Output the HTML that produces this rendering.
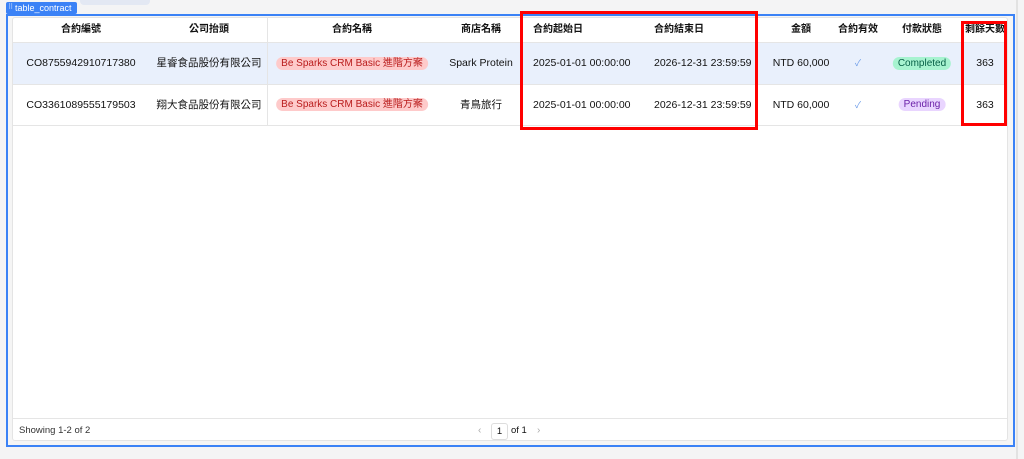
<!DOCTYPE html>
<html><head><meta charset="utf-8"><style>
*{margin:0;padding:0;box-sizing:border-box}
body{width:1024px;height:459px;background:#f4f4f5;position:relative;overflow:hidden;font-family:"Liberation Sans","Noto Sans CJK TC",sans-serif;font-size:10.5px;line-height:14px;color:#111}
.a{position:absolute;white-space:nowrap}
.t{position:absolute;white-space:nowrap;transform:translateX(-50%)}
.h{font-weight:bold;top:23px;font-size:10px}
.r1{top:56px}.r2{top:98px}
.pill{border-radius:7px;padding:0 5px;font-size:10px;line-height:13px}
.p1{top:57px}.p2{top:98px}
</style></head><body>
<div class="a" style="left:80px;top:0;width:70px;height:5px;background:#e3e8f3;border-radius:0 0 4px 4px"></div>
<div class="a" style="left:1016px;top:0;width:2px;height:459px;background:#e2e2e2"></div>
<div class="a" style="left:6px;top:2px;width:71px;height:12px;background:#3b82f6;border-radius:2px;color:#fff;font-size:9px;line-height:12px;padding-left:9px">table_contract</div>
<div class="a" style="left:8px;top:2px;color:#cfe0ff;font-size:7px;line-height:12px">⠿</div>
<div class="a" style="left:6px;top:14px;width:1009px;height:433px;border:2px solid #3b82f6;background:#f5f5f5"></div>
<div class="a" style="left:12px;top:17px;width:996px;height:424px;background:#fff;border:1px solid #e4e4e4;border-radius:3px"></div>
<div class="a" style="left:13px;top:42px;width:994px;height:1px;background:#e5e5e5"></div>
<div class="a" style="left:13px;top:43px;width:994px;height:41px;background:#e9f0fc"></div>
<div class="a" style="left:13px;top:84px;width:994px;height:1px;background:#e5e5e5"></div>
<div class="a" style="left:13px;top:125px;width:994px;height:1px;background:#e5e5e5"></div>
<div class="a" style="left:267px;top:18px;width:1px;height:108px;background:#e5e5e5"></div>
<div class="a" style="left:13px;top:418px;width:994px;height:1px;background:#e5e5e5"></div>

<div class="t h" style="left:81px">合約編號</div>
<div class="t h" style="left:209px">公司抬頭</div>
<div class="t h" style="left:352px">合約名稱</div>
<div class="t h" style="left:481px">商店名稱</div>
<div class="a h" style="left:533px">合約起始日</div>
<div class="a h" style="left:654px">合約結束日</div>
<div class="t h" style="left:801px">金額</div>
<div class="t h" style="left:858px">合約有效</div>
<div class="t h" style="left:922px">付款狀態</div>
<div class="t h" style="left:985px">剩餘天數</div>

<div class="t r1" style="left:81px">CO8755942910717380</div>
<div class="t r1" style="left:209px">星睿食品股份有限公司</div>
<div class="t pill p1" style="left:352px;background:#fecaca;color:#b91c1c">Be Sparks CRM Basic 進階方案</div>
<div class="t r1" style="left:481px">Spark Protein</div>
<div class="a r1" style="left:533px">2025-01-01 00:00:00</div>
<div class="a r1" style="left:654px">2026-12-31 23:59:59</div>
<div class="t r1" style="left:801px">NTD 60,000</div>
<div class="t r1" style="left:858px;color:#6b9be8;font-size:9px">✓</div>
<div class="t pill p1" style="left:922px;background:#a7f3d0;color:#065f46">Completed</div>
<div class="t r1" style="left:985px">363</div>

<div class="t r2" style="left:81px">CO3361089555179503</div>
<div class="t r2" style="left:209px">翔大食品股份有限公司</div>
<div class="t pill p2" style="left:352px;background:#fecaca;color:#b91c1c">Be Sparks CRM Basic 進階方案</div>
<div class="t r2" style="left:481px">青鳥旅行</div>
<div class="a r2" style="left:533px">2025-01-01 00:00:00</div>
<div class="a r2" style="left:654px">2026-12-31 23:59:59</div>
<div class="t r2" style="left:801px">NTD 60,000</div>
<div class="t r2" style="left:858px;color:#6b9be8;font-size:9px">✓</div>
<div class="t pill p2" style="left:922px;background:#e9d5ff;color:#6b21a8">Pending</div>
<div class="t r2" style="left:985px">363</div>

<div class="a" style="left:19px;top:424px;font-size:9.5px;color:#333">Showing 1-2 of 2</div>
<div class="a" style="left:478px;top:424px;font-size:10px;color:#aaa">‹</div>
<div class="a" style="left:491px;top:423px;width:17px;height:17px;border:1px solid #ddd;border-radius:3px;font-size:9.5px;text-align:center;line-height:15px">1</div>
<div class="a" style="left:511px;top:424px;font-size:9.5px">of 1</div>
<div class="a" style="left:537px;top:424px;font-size:10px;color:#aaa">›</div>

<div class="a" style="left:520px;top:11px;width:238px;height:119px;border:3px solid #f00"></div>
<div class="a" style="left:961px;top:21px;width:46px;height:105px;border:3px solid #f00"></div>
</body></html>
